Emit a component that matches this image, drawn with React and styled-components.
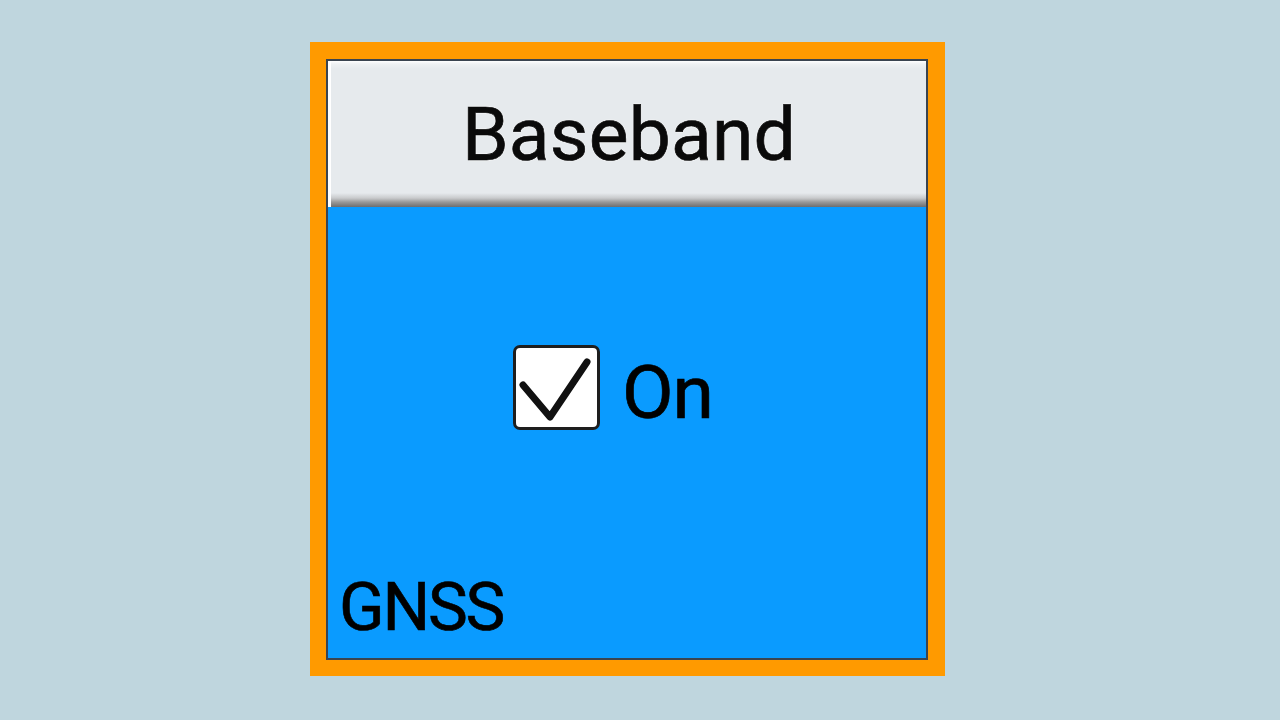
import React from "react";
import styled, { createGlobalStyle } from "styled-components";

const Global = createGlobalStyle`
  html, body { margin: 0; padding: 0; background: #bfd6de; }
  body { font-family: Roboto, "Liberation Sans", sans-serif; }
`;

const Page = styled.div`
  width: 1280px;
  height: 720px;
  box-sizing: border-box;
  padding: 42px 0 0 310px;
  background: #bfd6de;
`;

const Frame = styled.div`
  width: 635px;
  height: 634px;
  box-sizing: border-box;
  background: #ff9a00;
  padding: 17px 17px 16px 16px;
  display: flex;
`;

const Panel = styled.div`
  flex: 1;
  border: 2px solid #3a4450;
  display: flex;
  flex-direction: column;
  background: #0a9bff;
`;

const Header = styled.div`
  height: 146px;
  flex: none;
  display: flex;
  align-items: center;
  justify-content: center;
  background: linear-gradient(
    to bottom,
    #ffffff 0px,
    #eef1f3 3px,
    #e6eaed 8px,
    #e6eaed 132px,
    #c9cbcd 137px,
    #9a9a9a 141px,
    #6e6e6e 146px
  );
  box-shadow: inset 3px 0 0 #ffffff;
`;

const Title = styled.span`
  font-size: 75px;
  line-height: 1;
  color: #0a0a0a;
  -webkit-text-stroke: 0.7px #0a0a0a;
  text-shadow: 0 0 2px #ffffff, 0 0 2px #ffffff;
  letter-spacing: 0.2px;
  margin-left: 4px;
`;

const Body = styled.div`
  flex: 1;
  display: flex;
  flex-direction: column;
  padding: 138px 0 17px 185px;
`;

const Row = styled.div`
  display: flex;
  align-items: flex-end;
  gap: 22px;
`;

const Box = styled.div`
  width: 87px;
  height: 85px;
  box-sizing: border-box;
  border: 3px solid #1e1e1e;
  border-radius: 7px;
  background: #ffffff;
  display: flex;
`;

const Label = styled.span`
  font-size: 75px;
  line-height: 1;
  color: #000;
  -webkit-text-stroke: 0.7px #000;
  letter-spacing: -1px;
`;

const Footer = styled.span`
  margin-top: auto;
  margin-left: -174px;
  font-size: 67px;
  line-height: 1;
  color: #000;
  -webkit-text-stroke: 0.6px #000;
  letter-spacing: -2.2px;
`;

function Check() {
  return (
    <Box>
      <svg width="81" height="79" viewBox="3 3 81 79">
        <path
          d="M10 40 L37 72 L74 17"
          fill="none"
          stroke="#111"
          strokeWidth="7"
          strokeLinecap="round"
          strokeLinejoin="round"
        />
      </svg>
    </Box>
  );
}

export default function App() {
  return (
    <>
      <Global />
      <Page>
        <Frame>
          <Panel>
            <Header>
              <Title>Baseband</Title>
            </Header>
            <Body>
              <Row>
                <Check />
                <Label>On</Label>
              </Row>
              <Footer>GNSS</Footer>
            </Body>
          </Panel>
        </Frame>
      </Page>
    </>
  );
}
